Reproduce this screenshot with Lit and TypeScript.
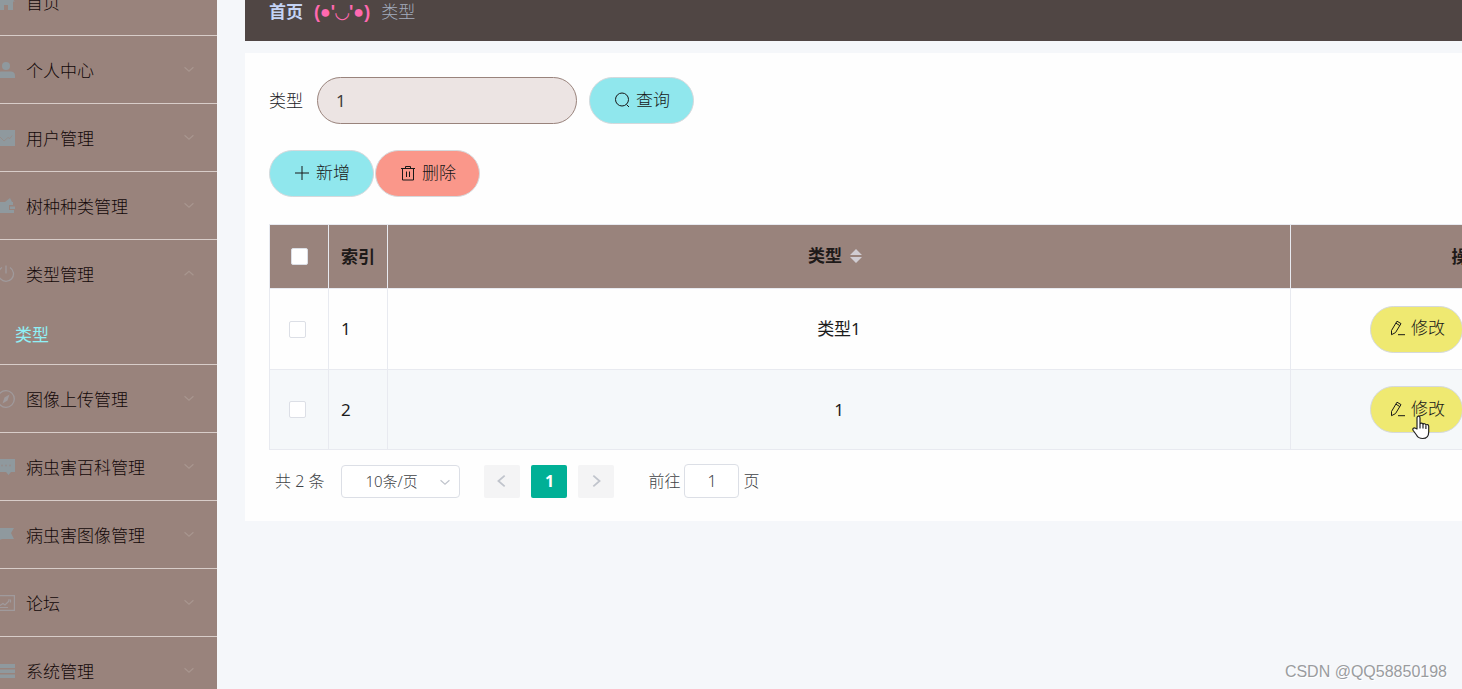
import { LitElement, html, css, svg, nothing } from "lit";
import { customElement, property, state } from "lit/decorators.js";
import { classMap } from "lit/directives/class-map.js";

const glyphs: Record<string, unknown> = {
  home: svg`<path fill="currentColor" d="M9 1 0 8.500h2V17h5v-5h4v5h5V8.500h2z"/>`,
  user: svg`<circle cx="9" cy="5" r="4" fill="currentColor"/><path fill="currentColor" d="M0 17v-2.500C0 12 2 10.500 4 10.500h10c2 0 4 1.500 4 4V17z"/>`,
  picture: svg`<path fill="currentColor" d="M0 1h18v16H0z"/><path d="m3 8 4 4 4-3.500 2 1 2-3" fill="none" stroke="#99837c" stroke-opacity=".6"/>`,
  wallet: svg`<path fill="currentColor" d="M1 5h7l5-4 2 4h1v3h-4v5h5v3H1zM13 9.500h5v2.500h-5z"/>`,
  power: svg`<path d="M5 2.500a7.500 7.500 0 1 0 8 0M9 .500v8" fill="none" stroke="currentColor" stroke-width="1.300"/>`,
  compass: svg`<circle cx="9" cy="9" r="8.300" fill="none" stroke="currentColor" stroke-width="1.300"/><path fill="currentColor" d="m12.500 4.500-2 6-5 3 2-6z"/>`,
  comment: svg`<path fill="currentColor" d="M0 1h18v13h-4l-2.500 3L9 14H0z"/><path d="M4 7.500h2M8 7.500h2M12 7.500h2" stroke="#99837c" stroke-opacity=".5" stroke-width="1.500"/>`,
  flag: svg`<path fill="currentColor" d="M0 1h2v1h15l-3 5 3 6H5l-3 1v4H0z"/>`,
  board: svg`<path d="M.600 1.600h16.800v14.800H.600zM3 11.500l3-2 2 1.500 4-4M11 6h2.500v2.500M3 13.500h8" fill="none" stroke="currentColor" stroke-width="1.200"/>`,
  system: svg`<path fill="currentColor" d="M0 2h18v4H0zM0 7.500h18v3.500H0zM0 12.500h18v3.500H0z"/>`,
  down: svg`<path d="m4 7 5 4.500L14 7" fill="none" stroke="currentColor" stroke-width="1.300"/>`,
  up: svg`<path d="m4 11.500 5-4.500 5 4.500" fill="none" stroke="currentColor" stroke-width="1.300"/>`,
  left: svg`<path d="M12 3 5 9l7 6" fill="none" stroke="currentColor" stroke-width="2"/>`,
  right: svg`<path d="m6 3 7 6-7 6" fill="none" stroke="currentColor" stroke-width="2"/>`,
  search: svg`<circle cx="9" cy="8.500" r="6.500" fill="none" stroke="currentColor"/><path d="m13.500 13.500 2.500 2.500" stroke="currentColor"/>`,
  plus: svg`<path d="M9 2v14M2 9h14" stroke="currentColor"/>`,
  trash: svg`<path d="M2 4.500h14M6.500 4.500v-2h5v2M3.500 4.500v11.500h11V4.500M7.500 7.500v5.500M10.500 7.500v5.500" fill="none" stroke="currentColor"/>`,
  edit: svg`<path d="M3.500 11.500 9 2.200l4 2.400L7.500 13.600 3.500 15.700zM8 4.200l3.800 2.400M10 15.700H17" fill="none" stroke="currentColor"/>`,
};

const icon = (name: string) =>
  html`<svg class="icon" viewBox="0 0 18 18" aria-hidden="true">${glyphs[name]}</svg>`;

interface MenuEntry {
  label: string;
  icon: string;
  children?: string[];
  leaf?: boolean;
}

const MENU: MenuEntry[] = [
  { label: "首页", icon: "home", leaf: true },
  { label: "个人中心", icon: "user" },
  { label: "用户管理", icon: "picture" },
  { label: "树种种类管理", icon: "wallet" },
  { label: "类型管理", icon: "power", children: ["类型"] },
  { label: "图像上传管理", icon: "compass" },
  { label: "病虫害百科管理", icon: "comment" },
  { label: "病虫害图像管理", icon: "flag" },
  { label: "论坛", icon: "board" },
  { label: "系统管理", icon: "system" },
];

@customElement("side-menu")
export class SideMenu extends LitElement {
  @state() private open = "类型管理";

  static styles = css`
    :host { display: block; overflow: hidden; background: #99837c; }
    ul { list-style: none; margin: 0; padding: 0; }
    .menu { margin-top: -32px; }
    .group { border-bottom: 1px solid #d8cdc9; }
    .entry {
      display: flex; align-items: center; gap: 11px; width: 100%; height: 67px;
      box-sizing: border-box; padding: 2px 20px 0 0; border: 0; background: none;
      font: inherit; color: #120808; text-align: left; cursor: pointer;
    }
    .icon { width: 18px; height: 18px; flex: none; display: block; }
    .lead { margin: -2px 0 0 -3px; color: #8f999e; }
    .thin { color: #a09a9c; }
    .label { flex: 1; }
    .arrow { color: #a8968f; margin-top: -4px; }
    .arrow .icon { width: 16px; height: 16px; }
    .sub { display: block; height: 57px; line-height: 56px; padding-left: 15px; color: #8ff0f6; font-weight: 400; text-decoration: none; }
  `;

  render() {
    return html`<nav><ul class="menu">${MENU.map((m) => {
      const open = m.label === this.open;
      return html`<li class="group">
        <button class="entry" aria-expanded=${m.leaf ? nothing : String(open)}
          @click=${() => (this.open = open ? "" : m.label)}>
          <span class=${classMap({ lead: true, thin: ["power", "compass", "board"].includes(m.icon) })}>${icon(m.icon)}</span>
          <span class="label">${m.label}</span>
          ${m.leaf ? nothing : html`<span class="arrow">${icon(open ? "up" : "down")}</span>`}
        </button>
        ${open && m.children ? m.children.map((c) => html`<a class="sub" href="#">${c}</a>`) : nothing}
      </li>`;
    })}</ul></nav>`;
  }
}

@customElement("pill-button")
export class PillButton extends LitElement {
  @property() icon = "";
  @property() tone = "cyan";

  static styles = css`
    :host { display: block; }
    .pill {
      display: flex; align-items: center; gap: 5px; height: 47px; box-sizing: border-box; padding: 0 23px 2px;
      border: 1px solid #d5d9dc; border-radius: 24px; font: inherit; line-height: 24px;
      color: #181818; white-space: nowrap; cursor: pointer;
    }
    .cyan { background: #90e7ed; }
    .red { background: #fa978a; }
    .yellow { background: #efe971; padding: 0 17px 2px; }
    .icon { display: block; width: 18px; height: 18px; }
  `;

  render() {
    return html`<button class="pill ${this.tone}">${icon(this.icon)}<span><slot></slot></span></button>`;
  }
}

@customElement("type-table")
export class TypeTable extends LitElement {
  @property({ attribute: false }) rows: string[] = [];

  static styles = css`
    :host { display: block; }
    table {
      width: 100%; table-layout: fixed; border-collapse: separate; border-spacing: 0;
      border-left: 1px solid #e8eaf0; border-top: 1px solid #e8eaf0; line-height: 24px;
    }
    th, td { box-sizing: border-box; padding: 0 12px; border-right: 1px solid #e8eaf0; border-bottom: 1px solid #e8eaf0; }
    th { height: 64px; background: #99837c; color: #1e1a19; font-weight: 700; }
    td { height: 81px; color: #1c1c1c; font-weight: 400; text-align: center; }
    td.actions { font-weight: 300; }
    .check { width: 59px; padding: 0; text-align: center; }
    td.check { padding-right: 4px; }
    .index { width: 59px; text-align: left; white-space: nowrap; }
    .actions { width: 356px; }
    .even td { height: 80px; background: #f5f8fa; }
    input {
      appearance: none; display: block; width: 17px; height: 17px; margin: 0 auto;
      border: 1px solid #dcdfe6; border-radius: 2px; background: #fff;
    }
    input:checked { background: #00b096; }
    .sort { display: flex; align-items: center; justify-content: center; gap: 8px; padding: 0 8px 2px 0; }
    .carets { width: 12px; height: 16px; }
    .buttons { display: flex; padding-left: 67px; }
    .spot { position: relative; }
    .hand { position: absolute; left: 42px; top: 29px; width: 18px; height: 25px; pointer-events: none; }
  `;

  render() {
    return html`<table>
      <thead><tr>
        <th class="check"><input type="checkbox" aria-label="全选"></th>
        <th class="index">索引</th>
        <th><span class="sort">类型<svg class="carets" viewBox="0 0 12 16" aria-hidden="true"><path fill="#d0ccd2" d="M6 1l6 6H0zM6 15l6-6H0z"/></svg></span></th>
        <th class="actions">操作</th>
      </tr></thead>
      <tbody>${this.rows.map((r, i) => html`<tr class=${classMap({ even: i % 2 === 1 })}>
        <td class="check"><input type="checkbox" aria-label=${`选择 ${i + 1}`}></td>
        <td class="index">${i + 1}</td>
        <td>${r}</td>
        <td class="actions"><div class="buttons"><span class="spot">
          <pill-button tone="yellow" icon="edit">修改</pill-button>
          ${i === 1 ? html`<svg class="hand" viewBox="0 0 18 25" aria-hidden="true"><path fill="#fff" stroke="#222" stroke-width="1.200" stroke-linejoin="round" d="M5 14V3c0-2.600 3-2.600 3 0v6c.4-1.300 2.700-1.200 3 .4.500-1.100 2.600-.9 2.900.6.700-.9 2.800-.5 2.800 1.200V17c0 4-2 6.500-6 6.500S5.500 22 4.500 20L1.200 15.500c-1.200-2 .9-3.400 2.300-2.200zM8 9v4.500M11 9.500v4M13.900 10.500v3.500"/></svg>` : nothing}
        </span></div></td>
      </tr>`)}</tbody>
    </table>`;
  }
}

@customElement("page-bar")
export class PageBar extends LitElement {
  static styles = css`
    :host { display: flex; align-items: center; padding: 14px 0 0 6px; font-size: 16px; line-height: 24px; color: #404246; white-space: nowrap; }
    .size { position: relative; margin: 0 24px 0 17px; }
    select {
      appearance: none; display: block; width: 119px; height: 33px; padding: 0 0 0 23px;
      border: 1px solid #dcdfe6; border-radius: 4px; background: #fff; font: inherit; font-size: 15px; color: #404246;
    }
    .chev { position: absolute; right: 7px; top: 9px; color: #c0c4cc; pointer-events: none; }
    .icon { display: block; width: 16px; height: 16px; }
    .pages { display: flex; gap: 11px; margin-right: 34px; }
    .pages button {
      display: grid; place-items: center; width: 36px; height: 33px; padding: 0; border: 0; border-radius: 2px;
      background: #f4f4f5; color: #c0c4cc; font: inherit;
    }
    .pages .current { background: #00b096; color: #fff; font-weight: 700; }
    label { display: flex; align-items: center; gap: 4px; }
    .jump {
      width: 55px; height: 34px; box-sizing: border-box; padding: 0; border: 1px solid #dcdfe6; border-radius: 4px;
      background: #fff; font: inherit; color: #404246; text-align: center;
    }
  `;

  render() {
    return html`
      <span>共 2 条</span>
      <span class="size"><select aria-label="每页条数"><option>10条/页</option></select><span class="chev">${icon("down")}</span></span>
      <span class="pages">
        <button aria-label="上一页" disabled>${icon("left")}</button>
        <button class="current">1</button>
        <button aria-label="下一页" disabled>${icon("right")}</button>
      </span>
      <label>前往<input class="jump" value="1">页</label>`;
  }
}

@customElement("app-root")
export class AppRoot extends LitElement {
  static styles = css`
    :host {
      display: grid; grid-template-columns: 217px minmax(0, 1fr); height: 100vh; overflow: hidden; position: relative;
      background: #f5f7fa; color: #606266;
      font: 300 17px/24px "Noto Sans", "Noto Sans CJK SC", sans-serif;
    }
    .main { padding-left: 28px; overflow: hidden; }
    .crumbs { display: flex; align-items: flex-start; height: 41px; box-sizing: border-box; padding: 0 24px; background: #504644; }
    .crumbs a { color: #c4d3f5; font-weight: 700; text-decoration: none; }
    .face { margin: 0 11px; color: #ff69b0; font-family: "Liberation Sans", "DejaVu Sans", sans-serif; font-size: 18px; font-weight: 700; }
    .here { color: #a3acbe; }
    .card { width: calc(100% + 209px); box-sizing: border-box; margin-top: 12px; padding: 24px 24px 23px; background: #fefefe; }
    .search { display: flex; align-items: center; }
    .search label { margin-right: 14px; color: #202024; }
    .search input {
      width: 260px; height: 47px; box-sizing: border-box; margin-right: 12px; padding: 0 18px;
      border: 1px solid #99837c; border-radius: 24px; background: #ece4e3; font: inherit; font-weight: 400; color: #403c3c;
    }
    .tools { display: flex; gap: 1px; margin: 26px 0 27px; }
    .mark { position: absolute; right: 15px; bottom: 5px; font-family: "Liberation Sans", sans-serif; font-size: 16px; color: #9a9c9f; text-shadow: 1px 1px 0 #fff; }
  `;

  render() {
    return html`
      <side-menu></side-menu>
      <main class="main">
        <nav class="crumbs"><a href="#">首页</a><span class="face">(●'◡'●)</span><span class="here">类型</span></nav>
        <section class="card">
          <div class="search">
            <label for="kind">类型</label><input id="kind" value="1">
            <pill-button icon="search">查询</pill-button>
          </div>
          <div class="tools">
            <pill-button icon="plus">新增</pill-button>
            <pill-button icon="trash" tone="red">删除</pill-button>
          </div>
          <type-table .rows=${["类型1", "1"]}></type-table>
          <page-bar></page-bar>
        </section>
      </main>
      <span class="mark">CSDN @QQ58850198</span>`;
  }
}
